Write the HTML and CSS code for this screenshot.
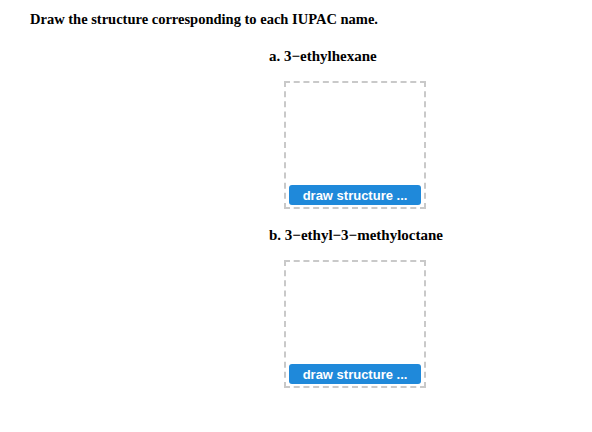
FILE: index.html
```html
<!DOCTYPE html>
<html>
	<head>
		<meta charset="UTF-8"/>
		<title>Draw Structures</title>
		<link rel="stylesheet" href="styles.css">
	</head>
	<body>
		<p class="Question">Draw the structure corresponding to each IUPAC name.</p>
		<div class="PartList">
			<div class="Part">
				<div class="PartLabel">a. 3&minus;ethylhexane</div>
				<div class="Sketch">
					<button class="SketchButton" type="button">draw structure ...</button>
				</div>
			</div>
			<div class="Part">
				<div class="PartLabel">b. 3&minus;ethyl&minus;3&minus;methyloctane</div>
				<div class="Sketch">
					<button class="SketchButton" type="button">draw structure ...</button>
				</div>
			</div>
		</div>
	</body>
</html>
```
FILE: styles.css
```css
body {
	margin: 0;
	background-color: #fff;
	color: #000;
	font-family: "Liberation Serif", "Times New Roman", serif;
}

.Question {
	margin: 0;
	padding: 11px 0 0 30px;
	font-size: 14.5px;
	font-weight: bold;
	line-height: 16px;
}

.PartList {
	display: flex;
	flex-direction: column;
	gap: 18px;
	padding: 21px 0 0 269px;
}

.Part {
	display: flex;
	flex-direction: column;
	align-items: flex-start;
	gap: 16px;
}

.PartLabel {
	font-size: 15px;
	font-weight: bold;
	line-height: 17px;
}

.Sketch {
	display: flex;
	align-items: flex-end;
	box-sizing: border-box;
	width: 142px;
	height: 128px;
	margin-left: 15px;
	padding: 0 3px 2px 3px;
	border: 2px dashed #c9c9c9;
}

.SketchButton {
	width: 132px;
	height: 20px;
	padding: 0;
	border: none;
	border-radius: 3px;
	background-color: #1f89da;
	color: #fff;
	font-family: "Liberation Sans", Arial, sans-serif;
	font-size: 13px;
	font-weight: bold;
}
```
